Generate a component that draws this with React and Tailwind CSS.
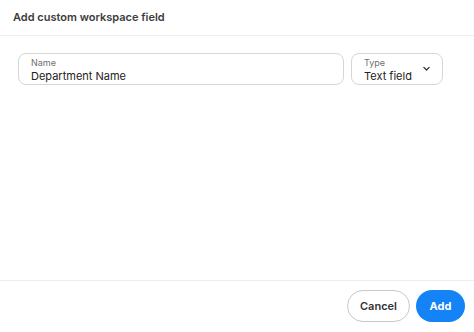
import React, { useState } from 'react';

const App = () => {
    const [name, setName] = useState('Department Name');

    return (
        <div className="w-[474px] h-[332px] bg-white flex flex-col font-['Inter',sans-serif] text-[#222]">
            <header className="h-[36px] flex items-center px-[13px] border-b border-[#ededed]">
                <h1 className="text-[11px] font-semibold text-[#3d3d3d]">Add custom workspace field</h1>
            </header>

            <div className="flex-1 px-[18px] pt-[17px]">
                <div className="flex gap-[7px]">
                    <label className="w-[326px] h-[32px] rounded-[8px] border border-[#d6d6d6] px-[12px] pt-[1px] flex flex-col justify-center">
                        <span className="text-[9px] leading-[12px] text-[#707070]">Name</span>
                        <input
                            value={name}
                            onChange={(e) => setName(e.target.value)}
                            className="text-[11px] leading-[14px] text-[#222] outline-none bg-transparent p-0"
                        />
                    </label>
                    <button className="w-[92px] h-[32px] rounded-[8px] border border-[#d6d6d6] pl-[12px] pr-[11px] pt-[1px] flex items-center justify-between text-left">
                        <span className="flex flex-col">
                            <span className="text-[9px] leading-[12px] text-[#707070]">Type</span>
                            <span className="text-[11px] leading-[14px] text-[#222]">Text field</span>
                        </span>
                        <svg className="w-[9px] h-[9px] text-[#333] -mt-[2px]" fill="none" stroke="currentColor" viewBox="0 0 24 24">
                            <path strokeLinecap="round" strokeLinejoin="round" strokeWidth="3.5" d="M5 9l7 7 7-7" />
                        </svg>
                    </button>
                </div>
            </div>

            <footer className="h-[52px] border-t border-[#ededed] flex items-center justify-end gap-[6px] pr-[9px] pb-[1px]">
                <button className="h-[32px] w-[63px] rounded-full border border-[#c9c9c9] text-[11px] font-semibold text-[#333]">
                    Cancel
                </button>
                <button className="h-[32px] w-[49px] rounded-full bg-[#1483f5] text-[11px] font-bold text-white">
                    Add
                </button>
            </footer>
        </div>
    );
};

export default App;
